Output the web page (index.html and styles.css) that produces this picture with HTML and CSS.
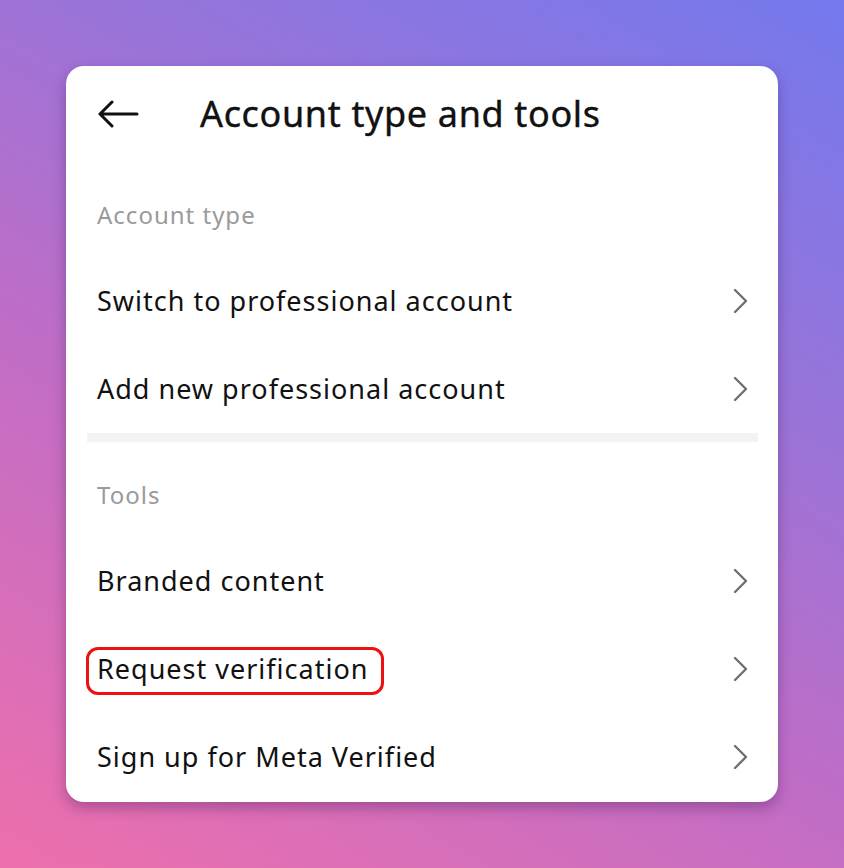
FILE: index.html
```html
<!DOCTYPE html>
<html lang="en">
<head>
<meta charset="utf-8">
<title>Account type and tools</title>
<link rel="stylesheet" href="styles.css">
</head>
<body>
<main class="card">
  <header class="header">
    <svg class="back" width="42" height="28" viewBox="0 0 42 28" aria-hidden="true">
      <path d="M40 14H3M15 2L3 14l12 12" fill="none" stroke="#111" stroke-width="3" stroke-linecap="round" stroke-linejoin="round"/>
    </svg>
    <h1 class="title">Account type and tools</h1>
  </header>

  <div class="label">Account type</div>
  <div class="row"><span class="row-text">Switch to professional account</span><svg class="chev" width="16" height="26" viewBox="0 0 16 26"><path d="M2 2l11 11L2 24" fill="none" stroke="#707070" stroke-width="2.4" stroke-linecap="round" stroke-linejoin="round"/></svg></div>
  <div class="row"><span class="row-text">Add new professional account</span><svg class="chev" width="16" height="26" viewBox="0 0 16 26"><path d="M2 2l11 11L2 24" fill="none" stroke="#707070" stroke-width="2.4" stroke-linecap="round" stroke-linejoin="round"/></svg></div>

  <div class="sep"></div>

  <div class="label">Tools</div>
  <div class="row"><span class="row-text">Branded content</span><svg class="chev" width="16" height="26" viewBox="0 0 16 26"><path d="M2 2l11 11L2 24" fill="none" stroke="#707070" stroke-width="2.4" stroke-linecap="round" stroke-linejoin="round"/></svg></div>
  <div class="row"><span class="row-text highlight">Request verification</span><svg class="chev" width="16" height="26" viewBox="0 0 16 26"><path d="M2 2l11 11L2 24" fill="none" stroke="#707070" stroke-width="2.4" stroke-linecap="round" stroke-linejoin="round"/></svg></div>
  <div class="row"><span class="row-text">Sign up for Meta Verified</span><svg class="chev" width="16" height="26" viewBox="0 0 16 26"><path d="M2 2l11 11L2 24" fill="none" stroke="#707070" stroke-width="2.4" stroke-linecap="round" stroke-linejoin="round"/></svg></div>
</main>
</body>
</html>
```

FILE: styles.css
```css
html, body {
  margin: 0;
  height: 100%;
}
body {
  width: 844px;
  height: 868px;
  box-sizing: border-box;
  padding: 66px;
  background: linear-gradient(30deg, #ee6fac 0%, #c06dc6 40%, #9674da 70%, #7479ee 100%);
  font-family: "Noto Sans", "DejaVu Sans", sans-serif;
  color: #111;
}
.card {
  width: 712px;
  height: 736px;
  background: #fff;
  border-radius: 18px;
  box-shadow: 0 6px 14px rgba(60, 20, 80, 0.35);
  overflow: hidden;
  display: flex;
  flex-direction: column;
}
.header {
  height: 96px;
  display: flex;
  align-items: center;
  padding-left: 31px;
  box-sizing: border-box;
}
.back {
  display: block;
}
.title {
  margin: 0 0 0 61px;
  font-size: 36px;
  font-weight: 400;
  line-height: 44px;
  letter-spacing: 0.65px;
  -webkit-text-stroke: 0.4px #111;
}
.label {
  padding: 37px 0 26px 31px;
  font-size: 24px;
  line-height: 32px;
  letter-spacing: 1px;
  color: #9a9a9a;
}
.row {
  height: 88px;
  display: flex;
  align-items: center;
  justify-content: space-between;
  padding: 0 29px 0 31px;
  font-size: 27px;
  letter-spacing: 1px;
}
.row-text {
  position: relative;
  line-height: 36px;
}
.chev {
  display: block;
}
.sep {
  height: 9px;
  margin: 0 20px 0 21px;
  background: #f3f3f3;
  flex: none;
}
.highlight::after {
  content: "";
  position: absolute;
  left: -11px;
  right: -16px;
  top: -4px;
  bottom: -8px;
  border: 3.5px solid #ee1111;
  border-radius: 12px;
}
```
